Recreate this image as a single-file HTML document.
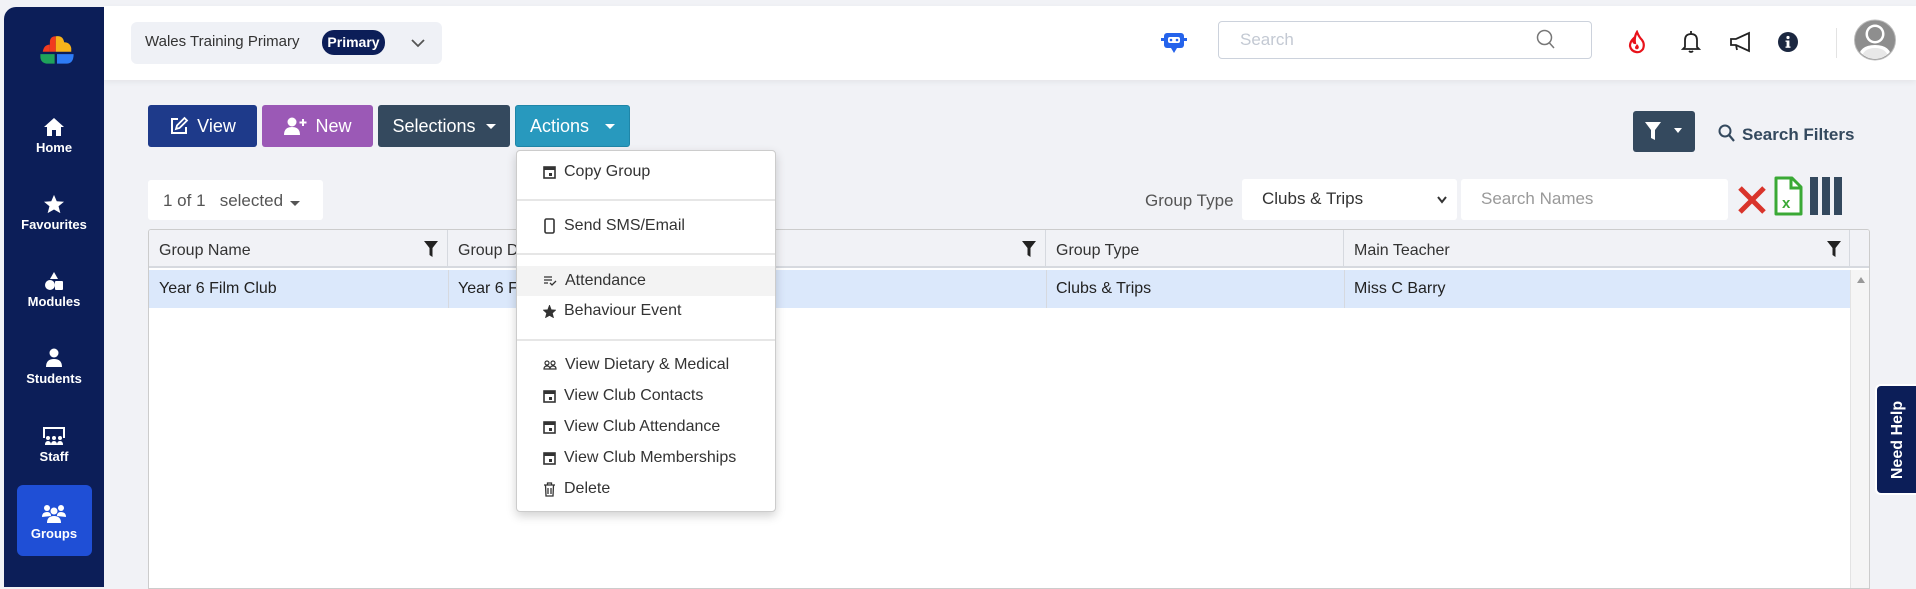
<!DOCTYPE html>
<html><head><style>
*{box-sizing:border-box;margin:0;padding:0}
body{width:1916px;height:578px;overflow:hidden;background:#f1f2f6;font-family:"Liberation Sans",sans-serif;position:relative;color:#333}
.abs{position:absolute}
#side{left:4px;top:7px;width:100px;height:580px;background:#0c1e58;border-radius:12px 0 0 0}
.nav{position:absolute;left:0;width:100px;text-align:center;color:#fff;font-size:13px;font-weight:bold}
.nav svg{display:block;margin:0 auto 3px}
#hdr{left:104px;top:6px;width:1812px;height:74px;background:#fff;box-shadow:0 2px 6px rgba(0,0,0,.06)}
.btn{position:absolute;top:105px;height:42px;border-radius:3px;color:#fff;font-size:18px;display:flex;align-items:center;justify-content:center;gap:8px}
.caret{display:inline-block;border-left:5px solid transparent;border-right:5px solid transparent;border-top:5px solid #fff;margin-left:2px}
.mi{position:absolute;left:26px;font-size:16px;color:#333;display:flex;align-items:center;gap:8px}
.div{position:absolute;left:0;right:0;height:2px;background:#e6e6e6}
.col{position:absolute;top:0;height:38px;border-right:1px solid #d6d9df;font-size:16px;padding:12px 10px;color:#333}
</style></head><body>
<div id="side" class="abs">
  <svg class="abs" style="left:34px;top:28px" width="38" height="31" viewBox="0 0 32 26"><path d="M10 14 L10 6 Q10 1 15 1 L15 14Z" fill="#f23b1e"/><path d="M15 1 Q21 0 22 6 Q27 6 28 11 L28 14 L15 14Z" fill="#f7b31a"/><path d="M2 16 L14 16 L14 24 L7 24 Q2 23 2 18Z" fill="#1fa35a"/><path d="M16 16 L30 16 Q30 24 24 24 L16 24Z" fill="#2e7cf6"/><path d="M4 14 Q5 8 10 8 L10 14Z" fill="#f23b1e"/></svg>
  <div class="nav" style="top:110px"><svg width="22" height="20" viewBox="0 0 22 20"><path d="M11 1 L21 10 L18 10 L18 19 L13 19 L13 13 L9 13 L9 19 L4 19 L4 10 L1 10Z" fill="#fff"/></svg>Home</div>
  <div class="nav" style="top:187px"><svg width="22" height="20" viewBox="0 0 24 22"><path d="M12 1 L15 8 L23 8.5 L17 13.5 L19 21 L12 17 L5 21 L7 13.5 L1 8.5 L9 8Z" fill="#fff"/></svg>Favourites</div>
  <div class="nav" style="top:264px"><svg width="22" height="20" viewBox="0 0 22 20"><path d="M11 1 L15 8 L7 8Z" fill="#fff"/><circle cx="7" cy="14" r="5" fill="#fff"/><rect x="12" y="10" width="8" height="9" rx="1" fill="#fff"/></svg>Modules</div>
  <div class="nav" style="top:341px"><svg width="22" height="20" viewBox="0 0 22 20"><circle cx="11" cy="5" r="4.5" fill="#fff"/><path d="M3 19 Q3 11 11 11 Q19 11 19 19Z" fill="#fff"/></svg>Students</div>
  <div class="nav" style="top:419px"><svg width="24" height="20" viewBox="0 0 24 20"><path d="M2 12 L2 2 L22 2 L22 12" stroke="#fff" stroke-width="2" fill="none"/><circle cx="6" cy="12" r="2" fill="#fff"/><circle cx="12" cy="12" r="2" fill="#fff"/><circle cx="18" cy="12" r="2" fill="#fff"/><path d="M3 19 Q3 15 6 15 Q9 15 9 19Z M9 19 Q9 15 12 15 Q15 15 15 19Z M15 19 Q15 15 18 15 Q21 15 21 19Z" fill="#fff"/></svg>Staff</div>
  <div class="abs" style="left:13px;top:478px;width:75px;height:71px;background:#1f4fd6;border-radius:6px"></div>
  <div class="nav" style="top:496px"><svg width="26" height="20" viewBox="0 0 26 20"><circle cx="6" cy="5" r="3" fill="#fff"/><circle cx="20" cy="5" r="3" fill="#fff"/><circle cx="13" cy="8" r="3.5" fill="#fff"/><path d="M1 14 Q1 9 6 9 Q10 9 10 13Z M16 13 Q16 9 20 9 Q25 9 25 14Z M6 20 Q6 13 13 13 Q20 13 20 20Z" fill="#fff"/></svg>Groups</div>
</div>
<div id="hdr" class="abs"></div>
<div class="abs" style="left:131px;top:22px;width:311px;height:42px;background:#eff1f6;border-radius:6px"></div>
<div class="abs" style="left:145px;top:33px;font-size:15px;color:#333">Wales Training Primary</div>
<div class="abs" style="left:322px;top:30px;width:63px;height:25px;background:#0c1e58;border-radius:12px;color:#fff;font-size:14px;font-weight:bold;text-align:center;line-height:25px">Primary</div>
<svg class="abs" style="left:410px;top:37px" width="16" height="12" viewBox="0 0 16 12"><path d="M2 3 L8 9 L14 3" stroke="#555" stroke-width="1.8" fill="none"/></svg>
<svg class="abs" style="left:1160px;top:28px" width="28" height="28" viewBox="0 0 28 28"><rect x="4" y="5" width="20" height="15" rx="3" fill="#2563eb"/><path d="M11 20 L14 25 L17 20Z" fill="#2563eb"/><rect x="1" y="10" width="3" height="3" fill="#2563eb"/><rect x="24" y="10" width="3" height="3" fill="#2563eb"/><rect x="8" y="9" width="12" height="6" rx="2" fill="#fff"/><circle cx="11" cy="12" r="1.3" fill="#2563eb"/><circle cx="17" cy="12" r="1.3" fill="#2563eb"/></svg>
<div class="abs" style="left:1218px;top:21px;width:374px;height:38px;border:1px solid #ccd2dc;border-radius:4px;background:#fff"></div>
<div class="abs" style="left:1240px;top:30px;font-size:17px;color:#c3c9d3">Search</div>
<svg class="abs" style="left:1536px;top:29px" width="20" height="22" viewBox="0 0 20 22"><circle cx="8.5" cy="8.5" r="7" stroke="#777" stroke-width="1.5" fill="none"/><path d="M13.5 14 L18 19" stroke="#777" stroke-width="1.5"/></svg>
<svg class="abs" style="left:1627px;top:30px" width="20" height="24" viewBox="0 0 20 24"><path d="M10 2 Q12 7 15 10 Q18 14 16 19 Q13 23 9 22 Q4 21 3 16 Q3 12 6 9 Q6 13 8 13 Q7 7 10 2Z" stroke="#e8121a" stroke-width="2.2" fill="none"/><path d="M10 14 Q13 17 11 19 Q8 20 8 17Z" fill="#e8121a"/></svg>
<svg class="abs" style="left:1681px;top:30px" width="20" height="24" viewBox="0 0 20 24"><path d="M4 17 L4 10 Q4 4 10 4 Q16 4 16 10 L16 17 L18 19 L2 19Z" stroke="#222" stroke-width="1.8" fill="none"/><path d="M8 21 Q10 23 12 21" stroke="#222" stroke-width="1.8" fill="none"/><path d="M10 1 L10 4" stroke="#222" stroke-width="1.8"/></svg>
<svg class="abs" style="left:1729px;top:31px" width="26" height="22" viewBox="0 0 26 22"><path d="M2 8 L2 14 L7 14 L20 20 L20 2 L7 8Z" stroke="#222" stroke-width="1.8" fill="none"/><path d="M7 14 L8 19" stroke="#222" stroke-width="1.8"/></svg>
<svg class="abs" style="left:1778px;top:32px" width="20" height="20" viewBox="0 0 20 20"><circle cx="10" cy="10" r="10" fill="#1b2740"/><circle cx="10" cy="5.5" r="1.6" fill="#fff"/><rect x="8.6" y="8.5" width="2.8" height="7" fill="#fff"/><rect x="7.5" y="8.5" width="2" height="1.3" fill="#fff"/><rect x="7.5" y="14.5" width="5" height="1.3" fill="#fff"/></svg>
<div class="abs" style="left:1836px;top:28px;width:1px;height:30px;background:#e3e3e3"></div>
<svg class="abs" style="left:1853px;top:19px" width="44" height="42" viewBox="0 0 44 42"><ellipse cx="22" cy="21" rx="20.5" ry="20" fill="#8e8e8e" stroke="#bbb" stroke-width="1"/><clipPath id="c"><ellipse cx="22" cy="21" rx="19.5" ry="19"/></clipPath><g clip-path="url(#c)"><circle cx="22" cy="15" r="9.5" fill="#fff"/><circle cx="22" cy="15" r="7" fill="#8e8e8e"/><path d="M5 42 Q5 26 22 26 Q39 26 39 42Z" fill="#fff"/><path d="M8 42 Q9 29 22 29 Q35 29 36 42Z" fill="#e8e8e8"/></g></svg>

<div class="btn" style="left:148px;width:109px;background:#1e3a8a"><svg width="20" height="20" viewBox="0 0 20 20"><path d="M9 3 L3 3 L3 17 L17 17 L17 11" stroke="#fff" stroke-width="2" fill="none"/><path d="M7 13 L8 9.5 L15.5 2 L18 4.5 L10.5 12Z" stroke="#fff" stroke-width="1.8" fill="none"/></svg>View</div>
<div class="btn" style="left:262px;width:111px;background:#9b59b6"><svg width="24" height="20" viewBox="0 0 24 20"><circle cx="9" cy="6" r="4.5" fill="#fff"/><path d="M1 19 Q1 11 9 11 Q17 11 17 19Z" fill="#fff"/><path d="M20 3 L20 10 M16.5 6.5 L23.5 6.5" stroke="#fff" stroke-width="2"/></svg>New</div>
<div class="btn" style="left:378px;width:132px;background:#34495e">Selections<span class="caret"></span></div>
<div class="btn" style="left:515px;width:115px;background:#2899be;border:1px solid #1f86a8">Actions <span class="caret" style="margin-left:8px"></span></div>

<div class="abs" style="left:1633px;top:111px;width:62px;height:41px;background:#34495e;border-radius:3px"></div>
<svg class="abs" style="left:1644px;top:121px" width="44" height="20" viewBox="0 0 44 20"><path d="M1 1 L17 1 L11 9 L11 19 L7 17 L7 9Z" fill="#fff"/><path d="M30 7 L38 7 L34 12Z" fill="#fff"/></svg>
<svg class="abs" style="left:1718px;top:124px" width="18" height="20" viewBox="0 0 18 20"><circle cx="7" cy="7" r="5.5" stroke="#34495e" stroke-width="2" fill="none"/><path d="M11 11 L16 17" stroke="#34495e" stroke-width="2.2"/></svg>
<div class="abs" style="left:1742px;top:125px;font-size:17px;font-weight:bold;color:#34495e">Search Filters</div>

<div class="abs" style="left:148px;top:180px;width:175px;height:40px;background:#fff;border-radius:3px"></div>
<div class="abs" style="left:163px;top:191px;font-size:17px;color:#555">1 of 1&nbsp;&nbsp;&nbsp;selected <span class="caret" style="border-top-color:#555"></span></div>

<div class="abs" style="left:1145px;top:191px;font-size:17px;color:#555">Group Type</div>
<div class="abs" style="left:1242px;top:179px;width:215px;height:41px;background:#fff;border-radius:3px"></div>
<div class="abs" style="left:1262px;top:189px;font-size:17px;color:#333">Clubs &amp; Trips</div>
<svg class="abs" style="left:1436px;top:195px" width="12" height="10" viewBox="0 0 12 10"><path d="M2 2 L6 7 L10 2" stroke="#333" stroke-width="2" fill="none"/></svg>
<div class="abs" style="left:1461px;top:179px;width:267px;height:41px;background:#fff;border-radius:3px"></div>
<div class="abs" style="left:1481px;top:189px;font-size:17px;color:#999">Search Names</div>
<svg class="abs" style="left:1737px;top:185px" width="30" height="30" viewBox="0 0 30 30"><path d="M3 3 L27 27 M27 3 L3 27" stroke="#d9342b" stroke-width="5"/></svg>
<svg class="abs" style="left:1773px;top:176px" width="30" height="40" viewBox="0 0 30 40"><path d="M3 2 L19 2 L28 11 L28 38 L3 38Z" stroke="#3aa935" stroke-width="3" fill="#fff" stroke-linejoin="round"/><path d="M18 2 L18 12 L28 12" stroke="#3aa935" stroke-width="3" fill="none"/><text x="9" y="32" font-family="Liberation Sans" font-size="15" fill="#3aa935" font-weight="bold">x</text></svg>
<div class="abs" style="left:1810px;top:177px;width:8px;height:38px;background:#34495e"></div>
<div class="abs" style="left:1822px;top:177px;width:8px;height:38px;background:#34495e"></div>
<div class="abs" style="left:1834px;top:177px;width:8px;height:38px;background:#34495e"></div>

<div class="abs" style="left:148px;top:229px;width:1722px;height:360px;background:#fff;border:1px solid #ccc;border-radius:3px 3px 0 0;overflow:hidden">
  <div class="abs" style="left:0;top:0;width:1722px;height:38px;background:#f1f2f6;border-bottom:2px solid #d6d9df"></div>
  <div class="col" style="left:0;width:299px">Group Name</div>
  <div class="col" style="left:299px;width:598px">Group Description</div>
  <div class="col" style="left:897px;width:298px">Group Type</div>
  <div class="col" style="left:1195px;width:506px">Main Teacher</div>
  <svg class="abs" style="left:275px;top:11px" width="14" height="16" viewBox="0 0 14 16"><path d="M0 0 L14 0 L8.5 7 L8.5 16 L5.5 14 L5.5 7Z" fill="#222"/></svg>
  <svg class="abs" style="left:873px;top:11px" width="14" height="16" viewBox="0 0 14 16"><path d="M0 0 L14 0 L8.5 7 L8.5 16 L5.5 14 L5.5 7Z" fill="#222"/></svg>
  <svg class="abs" style="left:1678px;top:11px" width="14" height="16" viewBox="0 0 14 16"><path d="M0 0 L14 0 L8.5 7 L8.5 16 L5.5 14 L5.5 7Z" fill="#222"/></svg>
  <div class="abs" style="left:0;top:40px;width:1701px;height:38px;background:#dbe8fb"></div>
  <div class="abs" style="left:299px;top:40px;width:1px;height:38px;background:#d6d9df"></div>
  <div class="abs" style="left:897px;top:40px;width:1px;height:38px;background:#d6d9df"></div>
  <div class="abs" style="left:1195px;top:40px;width:1px;height:38px;background:#d6d9df"></div>
  <div class="abs" style="left:10px;top:50px;font-size:16px;color:#222">Year 6 Film Club</div>
  <div class="abs" style="left:309px;top:50px;font-size:16px;color:#222">Year 6 Film Club</div>
  <div class="abs" style="left:907px;top:50px;font-size:16px;color:#222">Clubs &amp; Trips</div>
  <div class="abs" style="left:1205px;top:50px;font-size:16px;color:#222">Miss C Barry</div>
  <div class="abs" style="left:1701px;top:40px;width:21px;height:330px;background:#f5f5f5;border-left:1px solid #e3e3e3"></div>
  <svg class="abs" style="left:1707px;top:46px" width="10" height="8" viewBox="0 0 10 8"><path d="M1 7 L5 1 L9 7Z" fill="#999"/></svg>
</div>

<div class="abs" style="left:516px;top:150px;width:260px;height:362px;background:#fff;border:1px solid #ccc;border-radius:4px;box-shadow:0 4px 10px rgba(0,0,0,.18)">
  <div class="abs" style="left:0;right:0;top:115px;height:30px;background:#f3f3f3"></div>
  <div class="mi" style="top:12px"><svg width="13" height="14" viewBox="0 0 13 14"><rect x="1" y="2" width="11" height="11" stroke="#333" stroke-width="1.6" fill="none"/><rect x="1" y="2" width="11" height="3" fill="#333"/><rect x="6" y="8" width="3" height="3" fill="#333"/></svg>Copy Group</div>
  <div class="div" style="top:48px"></div>
  <div class="mi" style="top:66px"><svg width="13" height="16" viewBox="0 0 13 16"><rect x="2" y="1" width="9" height="14" rx="1.5" stroke="#333" stroke-width="1.6" fill="none"/></svg>Send SMS/Email</div>
  <div class="div" style="top:102px"></div>
  <div class="mi" style="top:121px"><svg width="14" height="12" viewBox="0 0 14 12"><path d="M1 2 L9 2 M1 5 L9 5 M1 8 L5 8 M7 8 L9 10 L13 6" stroke="#333" stroke-width="1.3" fill="none"/></svg>Attendance</div>
  <div class="mi" style="top:151px"><svg width="13" height="13" viewBox="0 0 13 13"><path d="M6.5 1 L8 5 L12 5.3 L9 8 L10 12 L6.5 10 L3 12 L4 8 L1 5.3 L5 5Z" stroke="#333" stroke-width="1.3" fill="#333"/></svg>Behaviour Event</div>
  <div class="div" style="top:188px"></div>
  <div class="mi" style="top:205px"><svg width="14" height="12" viewBox="0 0 14 12"><circle cx="4" cy="4" r="2" stroke="#333" stroke-width="1.2" fill="none"/><circle cx="10" cy="4" r="2" stroke="#333" stroke-width="1.2" fill="none"/><path d="M1 10 Q1 7 4 7 Q7 7 7 10Z M7 10 Q7 7 10 7 Q13 7 13 10Z" stroke="#333" stroke-width="1.2" fill="none"/></svg>View Dietary &amp; Medical</div>
  <div class="mi" style="top:236px"><svg width="13" height="14" viewBox="0 0 13 14"><rect x="1" y="2" width="11" height="11" stroke="#333" stroke-width="1.6" fill="none"/><rect x="1" y="2" width="11" height="3" fill="#333"/><rect x="6" y="8" width="3" height="3" fill="#333"/></svg>View Club Contacts</div>
  <div class="mi" style="top:267px"><svg width="13" height="14" viewBox="0 0 13 14"><rect x="1" y="2" width="11" height="11" stroke="#333" stroke-width="1.6" fill="none"/><rect x="1" y="2" width="11" height="3" fill="#333"/><rect x="6" y="8" width="3" height="3" fill="#333"/></svg>View Club Attendance</div>
  <div class="mi" style="top:298px"><svg width="13" height="14" viewBox="0 0 13 14"><rect x="1" y="2" width="11" height="11" stroke="#333" stroke-width="1.6" fill="none"/><rect x="1" y="2" width="11" height="3" fill="#333"/><rect x="6" y="8" width="3" height="3" fill="#333"/></svg>View Club Memberships</div>
  <div class="mi" style="top:329px"><svg width="13" height="15" viewBox="0 0 13 15"><path d="M1 3 L12 3 M4.5 3 L4.5 1 L8.5 1 L8.5 3 M2.5 3 L3 14 L10 14 L10.5 3 M5 6 L5 12 M8 6 L8 12" stroke="#333" stroke-width="1.3" fill="none"/></svg>Delete</div>
</div>

<div class="abs" style="left:1875px;top:384px;width:45px;height:111px;background:#0c1e58;border-radius:6px 0 0 6px;border:2px solid #fff;border-right:none"></div>
<div class="abs" style="left:1884px;top:440px;width:0;height:0"><div style="transform:translate(-50%,-50%) rotate(-90deg);color:#fff;font-size:16px;font-weight:bold;white-space:nowrap;position:absolute;left:14px;top:0">Need Help</div></div>
</body></html>
